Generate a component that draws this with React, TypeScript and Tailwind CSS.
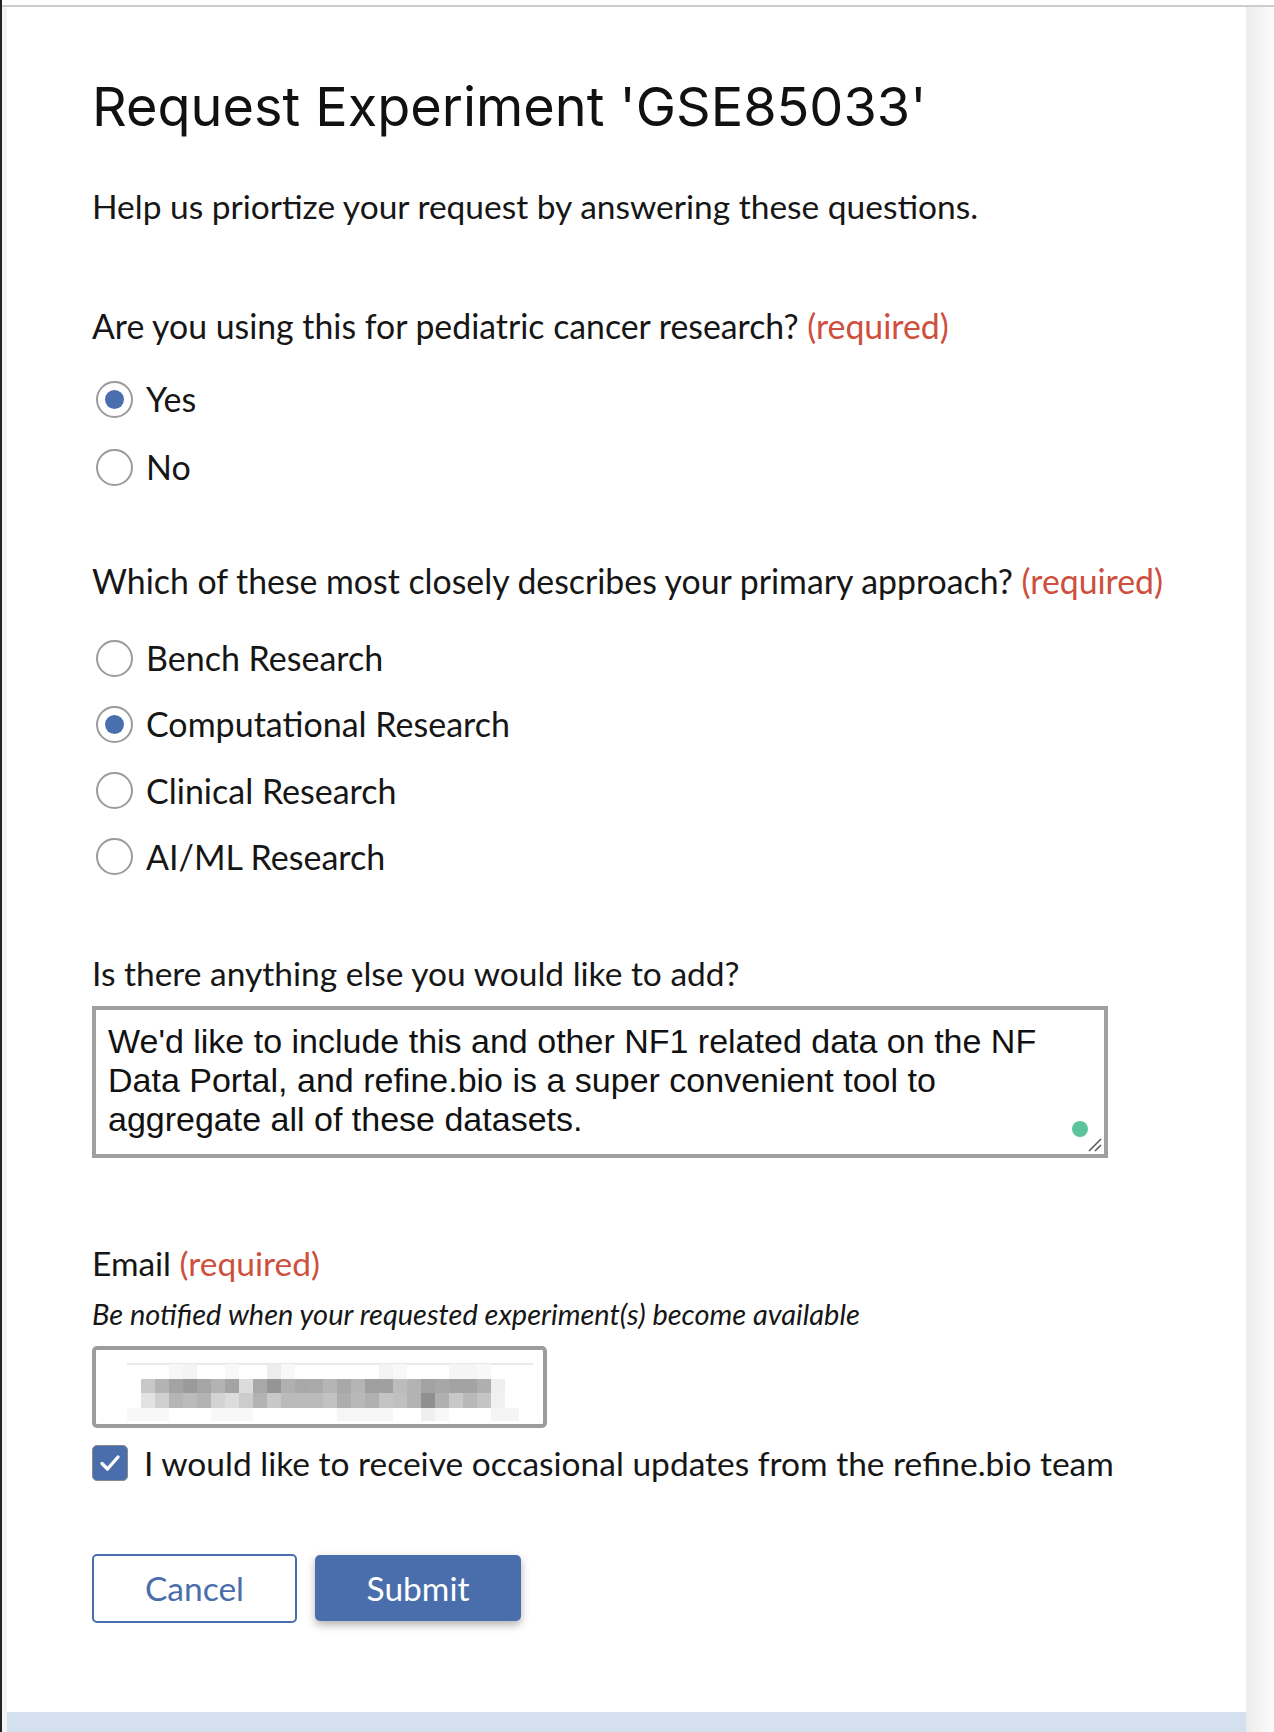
import React, { useState } from 'react';

// mosaic of the blurred email address: [top offset, height, greys by column]
const PIXEL_ROWS: [number, number, number[]][] = [
  [0, 15, [255, 255, 255, 247, 243, 255, 255, 248, 255, 255, 237, 248, 255, 255, 255, 255, 255, 255, 243, 248, 255, 255, 255, 245, 245, 248]],
  [15, 14, [255, 200, 179, 163, 154, 165, 179, 163, 220, 168, 149, 176, 168, 170, 181, 168, 181, 159, 160, 188, 179, 163, 167, 163, 163, 175, 239]],
  [29, 15, [255, 226, 208, 181, 187, 179, 211, 220, 204, 179, 200, 187, 187, 187, 194, 173, 184, 176, 196, 192, 179, 143, 176, 200, 184, 196, 240]],
  [44, 13, [248, 248, 248, 255, 255, 255, 248, 248, 248, 255, 255, 255, 255, 255, 255, 246, 246, 246, 246, 255, 255, 239, 248, 255, 255, 255, 245, 245]],
];

function Pixelated() {
  return (
    <svg width="406" height="58" viewBox="0 0 406 58" className="block">
      <rect x="0" y="0" width="406" height="2" fill="#e9e9e9" />
      {PIXEL_ROWS.map(([y, h, vals]) =>
        vals.map((v, i) =>
          v === 255 ? null : (
            <rect key={y + '-' + i} x={i * 14} y={y + 1} width="14" height={h} fill={`rgb(${v},${v},${v})`} />
          )
        )
      )}
    </svg>
  );
}

function Radio({ label, checked }: { label: string; checked?: boolean }) {
  return (
    <label className="flex h-[48px] cursor-pointer items-center">
      <span className="ml-[4px] flex h-[37px] w-[37px] items-center justify-center rounded-full border-2 border-[#9b9b9b] bg-white">
        {checked && <span className="h-[19px] w-[19px] rounded-full bg-[#4a6fae]" />}
      </span>
      <span className="ml-[13px] text-[34px]">{label}</span>
    </label>
  );
}

const Required = () => <span className="text-[#cd4f3d]">(required)</span>;

export default function App() {
  const [pediatric] = useState('yes');
  const [approach] = useState('Computational Research');

  return (
    <div className="flex h-[1732px] w-full bg-white font-['Lato',sans-serif] text-[33.5px] leading-[48px] text-[#161616]">
      <div className="w-[2px] shrink-0 bg-[#1f2327]" />
      <div className="flex flex-1 flex-col">
        <div className="h-[5px]" />
        <div className="h-[2px] bg-[#cdcdcd]" />
        <div className="flex flex-1">
          <main className="flex w-[1244px] flex-col border-l-[5px] border-[#f3f3f3]">
            <div className="flex flex-1 flex-col pl-[85px] pt-[68px]">
              <h1 className="font-['Inter',sans-serif] text-[54px] font-normal leading-[64px] text-[#111]">
                Request Experiment 'GSE85033'
              </h1>
              <p className="mt-[43px]">Help us priortize your request by answering these questions.</p>

              <p className="mt-[72px] text-[33.8px]">
                Are you using this for pediatric cancer research? <Required />
              </p>
              <div className="mt-[25px] flex flex-col gap-[20px]">
                <Radio label="Yes" checked={pediatric === 'yes'} />
                <Radio label="No" checked={pediatric === 'no'} />
              </div>

              <p className="mt-[66px] text-[33.8px]">
                Which of these most closely describes your primary approach? <Required />
              </p>
              <div className="mt-[29px] flex flex-col gap-[18.3px]">
                {['Bench Research', 'Computational Research', 'Clinical Research', 'AI/ML Research'].map((a) => (
                  <Radio key={a} label={a} checked={approach === a} />
                ))}
              </div>

              <p className="mt-[68px]">Is there anything else you would like to add?</p>
              <div className="relative mt-[9px] h-[152px] w-[1016px] border-4 border-[#a0a0a0] bg-white px-[12px] pt-[12px] font-['Liberation_Sans',Arial,sans-serif] text-[34px] leading-[39px] text-[#111]">
                We'd like to include this and other NF1 related data on the NF Data Portal, and refine.bio is a super convenient tool to aggregate all of these datasets.
                <span className="absolute bottom-[17px] right-[16px] h-[16px] w-[16px] rounded-full bg-[#5bc49c]" />
                <svg className="absolute bottom-[2px] right-[2px]" width="16" height="16" viewBox="0 0 16 16">
                  <path d="M15 3 L3 15 M15 9 L9 15" stroke="#555" strokeWidth="1.5" fill="none" />
                </svg>
              </div>

              <p className="mt-[81px]">
                Email <Required />
              </p>
              <p className="mt-[9px] text-[29px] italic leading-[36px]">
                Be notified when your requested experiment(s) become available
              </p>
              <div className="mt-[14px] flex h-[82px] w-[455px] items-start rounded-[5px] border-4 border-[#9c9c9c] bg-white pl-[31px] pt-[13px]">
                <Pixelated />
              </div>

              <label className="mt-[11px] flex h-[48px] items-center">
                <span className="flex h-[36px] w-[36px] items-center justify-center rounded-[5px] border border-[#8a8a8a] bg-[#4a6eac]">
                  <svg width="22" height="18" viewBox="0 0 22 18">
                    <path d="M3 9.5 L8.5 15 L19 3" stroke="#fff" strokeWidth="3.4" fill="none" strokeLinecap="round" strokeLinejoin="round" />
                  </svg>
                </span>
                <span className="ml-[16px]">I would like to receive occasional updates from the refine.bio team</span>
              </label>

              <div className="mt-[67px] flex items-center gap-[18px]">
                <button className="h-[69px] w-[205px] rounded-[5px] border-2 border-[#4a6eac] bg-white text-[33.5px] text-[#4a6eac]">
                  Cancel
                </button>
                <button className="h-[66px] w-[206px] rounded-[5px] bg-[#4a6eac] text-[33.5px] text-white shadow-[0_4px_8px_rgba(0,0,0,0.3)]">
                  Submit
                </button>
              </div>
            </div>
            <div className="h-[20px] bg-[#d5e0ee]" />
          </main>
          <div className="flex-1 bg-gradient-to-r from-[#ececec] to-[#fbfbfb]" />
        </div>
      </div>
    </div>
  );
}
